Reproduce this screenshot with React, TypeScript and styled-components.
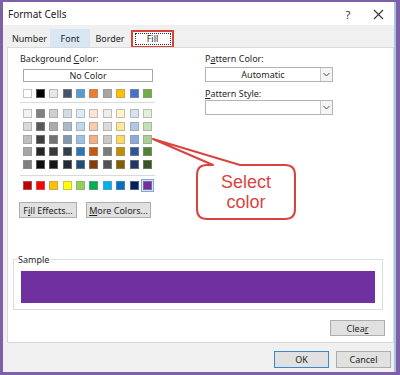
import styled, { createGlobalStyle } from 'styled-components'

const GlobalStyle = createGlobalStyle`
  html, body { margin: 0; padding: 0; background: #fff; }
  body { font-family: "Noto Sans", "Open Sans", sans-serif; color: #1f1f1f; }
  * { box-sizing: border-box; }
`

const themeColors = ['#FFFFFF', '#000000', '#E7E6E6', '#44546A', '#5B9BD5', '#ED7D31', '#A5A5A5', '#FFC000', '#4472C4', '#70AD47']

const shades = [
  ['#F2F2F2', '#808080', '#D0CECE', '#D6DCE4', '#DDEBF7', '#FCE4D6', '#EDEDED', '#FFF2CC', '#D9E1F2', '#E2EFDA'],
  ['#D9D9D9', '#595959', '#AEAAAA', '#ACB9CA', '#BDD7EE', '#F8CBAD', '#DBDBDB', '#FFE699', '#B4C6E7', '#C6E0B4'],
  ['#BFBFBF', '#404040', '#757171', '#8497B0', '#9BC2E6', '#F4B084', '#C9C9C9', '#FFD966', '#8EA9DB', '#A9D08E'],
  ['#A6A6A6', '#262626', '#3A3838', '#333F4F', '#2F75B5', '#C65911', '#7B7B7B', '#BF8F00', '#305496', '#548235'],
  ['#808080', '#0D0D0D', '#161616', '#222B35', '#1F4E78', '#833C0C', '#525252', '#806000', '#203764', '#375623'],
]

const standard = ['#C00000', '#FF0000', '#FFC000', '#FFFF00', '#92D050', '#00B050', '#00B0F0', '#0070C0', '#002060', '#7030A0']

const App = () => {
  return (
    <>
      <GlobalStyle />
      <Frame>
        <Window>
          <TitleBar>
            <Title>Format Cells</Title>
            <TitleButtons>
              <TitleButton>?</TitleButton>
              <TitleButton>
                <svg width="11" height="11" viewBox="0 0 11 11">
                  <path d="M1 1 L10 10 M10 1 L1 10" stroke="#333" strokeWidth="1.1" fill="none" />
                </svg>
              </TitleButton>
            </TitleButtons>
          </TitleBar>

          <Body>
            <Tabs>
              <Tab $w={41}>Number</Tab>
              <Tab $w={40} $hover>Font</Tab>
              <Tab $w={40}>Border</Tab>
              <ActiveTab>
                <FocusBox>Fill</FocusBox>
              </ActiveTab>
            </Tabs>

            <Panel>
              <PanelTop>
                <LeftCol>
                  <Label>Background <u>C</u>olor:</Label>
                  <NoColor>No Color</NoColor>
                  <SwatchGrid $top={7}>
                    {themeColors.map((c, i) => <Swatch key={i} $c={c} />)}
                  </SwatchGrid>
                  <Separator $top={4} />
                  <SwatchGrid $top={6}>
                    {shades.flat().map((c, i) => <Swatch key={i} $c={c} />)}
                  </SwatchGrid>
                  <Separator $top={6} />
                  <SwatchGrid $top={5}>
                    {standard.map((c, i) => <Swatch key={i} $c={c} $selected={i === 9} />)}
                  </SwatchGrid>
                  <ButtonRow>
                    <Button $w={58}>F<u>i</u>ll Effects...</Button>
                    <Button $w={65}><u>M</u>ore Colors...</Button>
                  </ButtonRow>
                </LeftCol>

                <RightCol>
                  <Label>P<u>a</u>ttern Color:</Label>
                  <Dropdown $top={3}>
                    <DropValue>Automatic</DropValue>
                    <DropArrow>
                      <svg width="7" height="5" viewBox="0 0 7 5">
                        <path d="M0.5 1 L3.5 4 L6.5 1" stroke="#555" strokeWidth="1" fill="none" />
                      </svg>
                    </DropArrow>
                  </Dropdown>
                  <Label $top={6}><u>P</u>attern Style:</Label>
                  <Dropdown $top={1}>
                    <DropValue />
                    <DropArrow>
                      <svg width="7" height="5" viewBox="0 0 7 5">
                        <path d="M0.5 1 L3.5 4 L6.5 1" stroke="#555" strokeWidth="1" fill="none" />
                      </svg>
                    </DropArrow>
                  </Dropdown>
                </RightCol>
              </PanelTop>

              <Sample>
                <SampleLegend>Sample</SampleLegend>
                <SampleFill />
              </Sample>

              <ClearButton>Clea<u>r</u></ClearButton>
            </Panel>

            <Footer>
              <Button $w={55} $h={17} $primary>OK</Button>
              <Button $w={55} $h={17}>Cancel</Button>
            </Footer>
          </Body>
        </Window>

        <Callout>
          <svg width="152" height="90" viewBox="0 0 152 90">
            <path
              d="M57 30 L63 30 L3 4 L90 30 L135 30 Q145 30 145 40 L145 74 Q145 84 135 84 L57 84 Q47 84 47 74 L47 40 Q47 30 57 30 Z"
              fill="#fff"
              stroke="#d8453f"
              strokeWidth="2"
              strokeLinejoin="round"
            />
          </svg>
          <CalloutText>Select<br />color</CalloutText>
        </Callout>
      </Frame>
    </>
  )
}

export default App

const Frame = styled.div`
  position: relative;
  width: 400px;
  height: 375px;
  border-style: solid;
  border-color: #7d60a8;
  border-width: 2px 4px 3px 3px;
  display: flex;
`

const Window = styled.div`
  flex: 1;
  display: flex;
  flex-direction: column;
  background: #f0f0f0;
  border-right: 2px solid #a9c5e2;
`

const TitleBar = styled.div`
  height: 23px;
  background: #fff;
  display: flex;
  align-items: center;
  padding-left: 5px;
`

const Title = styled.div`
  font-size: 10px;
  color: #222;
`

const TitleButtons = styled.div`
  margin-left: auto;
  display: flex;
  margin-right: 1px;
  margin-top: 2px;
`

const TitleButton = styled.div`
  width: 30px;
  height: 20px;
  display: flex;
  align-items: center;
  justify-content: center;
  font-size: 11px;
  color: #333;
`

const Body = styled.div`
  flex: 1;
  display: flex;
  flex-direction: column;
  padding: 4px 0 0 4px;
`

const Tabs = styled.div`
  height: 18px;
  display: flex;
  margin-left: 2px;
`

const Tab = styled.div<{ $w: number; $hover?: boolean }>`
  width: ${p => p.$w}px;
  height: 18px;
  display: flex;
  align-items: center;
  justify-content: center;
  font-size: 9px;
  background: ${p => (p.$hover ? '#d9e7f4' : 'transparent')};
`

const ActiveTab = styled.div`
  width: 43px;
  height: 18px;
  margin-left: 1px;
  margin-top: 1px;
  display: flex;
  align-items: center;
  justify-content: center;
  background: #fff;
  border: 2px solid #d8433a;
`

const FocusBox = styled.div`
  width: 36px;
  height: 12px;
  border: 1px dotted #333;
  font-size: 9px;
  line-height: 10px;
  text-align: center;
`

const Panel = styled.div`
  height: 296px;
  background: #fff;
  border: 1px solid #dadada;
  display: flex;
  flex-direction: column;
`

const PanelTop = styled.div`
  display: flex;
  padding: 5px 0 0 12px;
`

const LeftCol = styled.div`
  width: 135px;
  display: flex;
  flex-direction: column;
`

const RightCol = styled.div`
  width: 128px;
  margin-left: 50px;
  display: flex;
  flex-direction: column;
`

const Label = styled.div<{ $top?: number }>`
  font-size: 9px;
  line-height: 11px;
  height: 11px;
  margin-top: ${p => p.$top ?? 0}px;
  white-space: nowrap;
`

const NoColor = styled.div`
  margin: 5px 0 0 3px;
  width: 130px;
  height: 13px;
  border: 1px solid #a8a8a8;
  font-size: 9px;
  line-height: 11px;
  text-align: center;
`

const SwatchGrid = styled.div<{ $top: number }>`
  display: grid;
  grid-template-columns: repeat(10, 9px);
  column-gap: 4.4px;
  row-gap: 3.75px;
  margin: ${p => p.$top}px 0 0 2.5px;
`

const Swatch = styled.div<{ $c: string; $selected?: boolean }>`
  width: 9px;
  height: 9px;
  background: ${p => p.$c};
  border: 1px solid rgba(150, 150, 150, 0.55);
  outline: ${p => (p.$selected ? '1px solid #7fa8d8' : 'none')};
  outline-offset: 1px;
  box-shadow: ${p => (p.$selected ? '0 0 0 1px #d5e6f7' : 'none')};
`

const Separator = styled.div<{ $top: number }>`
  height: 1px;
  width: 135px;
  background: #d9d9d9;
  margin-top: ${p => p.$top}px;
`

const ButtonRow = styled.div`
  display: flex;
  gap: 9px;
  margin: 12px 0 0 -1px;
`

const Button = styled.div<{ $w: number; $h?: number; $primary?: boolean }>`
  width: ${p => p.$w}px;
  height: ${p => p.$h ?? 16}px;
  background: #e1e1e1;
  border: 1px solid ${p => (p.$primary ? '#3c87d0' : '#adadad')};
  font-size: 9px;
  display: flex;
  align-items: center;
  justify-content: center;
  white-space: nowrap;
`

const Dropdown = styled.div<{ $top: number }>`
  margin-top: ${p => p.$top}px;
  height: 15px;
  border: 1px solid #b4b4b4;
  display: flex;
`

const DropValue = styled.div`
  flex: 1;
  font-size: 9px;
  line-height: 13px;
  text-align: center;
`

const DropArrow = styled.div`
  width: 12px;
  border-left: 1px solid #c8c8c8;
  background: #f4f4f4;
  display: flex;
  align-items: center;
  justify-content: center;
`

const Sample = styled.fieldset`
  margin: 35.5px 0 0 5px;
  width: 370px;
  padding: 6.5px 7px 6px 7px;
  border: 1px solid #dcdcdc;
`

const SampleLegend = styled.legend`
  font-size: 9px;
  line-height: 11px;
  padding: 0 1px;
  margin-left: -4px;
`

const SampleFill = styled.div`
  height: 32px;
  background: #7030a0;
`

const ClearButton = styled(Button).attrs({ $w: 55 })`
  align-self: flex-end;
  margin: 10px 8px 0 0;
`

const Footer = styled.div`
  flex: 1;
  display: flex;
  justify-content: flex-end;
  align-items: flex-start;
  gap: 7px;
  padding: 8px 3px 0 0;
`

const Callout = styled.div`
  position: absolute;
  left: 147px;
  top: 133px;
  width: 152px;
  height: 90px;
`

const CalloutText = styled.div`
  position: absolute;
  left: 47px;
  top: 30px;
  width: 98px;
  height: 54px;
  display: flex;
  align-items: center;
  justify-content: center;
  text-align: center;
  font-family: "Liberation Sans", Arial, sans-serif;
  font-size: 18px;
  line-height: 20px;
  color: #d8453f;
`
